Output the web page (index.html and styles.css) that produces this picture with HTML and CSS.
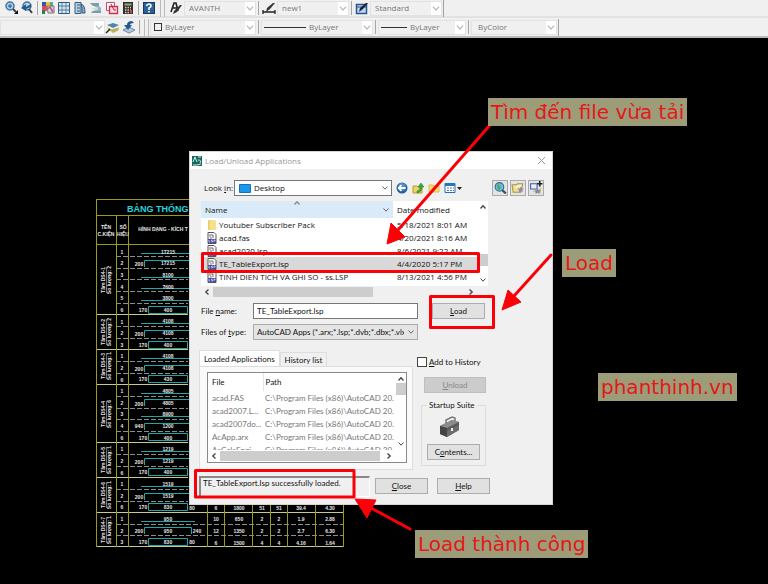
FILE: index.html
```html
<!DOCTYPE html>
<html lang="vi">
<head>
<meta charset="utf-8">
<title>Load/Unload Applications</title>
<link rel="stylesheet" href="styles.css">
</head>
<body>
<svg class="defs" width="0" height="0" aria-hidden="true">
  <symbol id="down" viewBox="0 0 8 8"><path d="M1.5 2.5 4 5.2 6.500 2.500" fill="none" stroke="currentColor"/></symbol>
  <symbol id="up" viewBox="0 0 8 8"><path d="M1.500 5.500 4 2.800 6.500 5.500" fill="none" stroke="currentColor" stroke-width="1.300"/></symbol>
  <symbol id="left" viewBox="0 0 8 8"><path d="M5.500 1.500 2.800 4 5.500 6.500" fill="none" stroke="currentColor" stroke-width="1.300"/></symbol>
  <symbol id="right" viewBox="0 0 8 8"><path d="M2.500 1.500 5.200 4 2.500 6.500" fill="none" stroke="currentColor" stroke-width="1.300"/></symbol>
  <symbol id="lsp" viewBox="0 0 10 12"><path d="M1 .5h6l2 2v9H1z" fill="#fff" stroke="#555"/><path d="M3 2v3M5 2v2M6 3v3M3 6h2" stroke="#444" stroke-width=".8"/><path d="M1 7h8v4H1z" fill="#4a4aa8"/><path d="M2 8v2h1M5.500 8h-1v1h1v1h-1M7 10V8h1v1" fill="none" stroke="#fff" stroke-width=".6"/></symbol>
  <symbol id="bar" viewBox="0 0 60 12"><path d="M1 9.500h59" stroke="#1fa8a8" fill="none"/></symbol>
  <symbol id="bracket" viewBox="0 0 60 12"><path d="M60 4.500H4.500V11" stroke="#1fa8a8" fill="none"/></symbol>
  <symbol id="box" viewBox="0 0 60 12"><path d="M8.500 3.500h39v7h-39z" stroke="#1fa8a8" fill="none"/></symbol>
</svg>

<header class="toolbars">
  <div class="toolbar">
    <div class="tools">
      <button type="button" aria-label="Zoom window"><svg viewBox="0 0 16 16"><circle cx="7" cy="6" r="4" fill="#9fd0ee" stroke="#4d7196" stroke-width="1.500"/><path d="M5 6h4M7 4v4" stroke="#31557c"/><path d="m10 9 3 3" stroke="#345" stroke-width="2"/><path d="M15 10v4h-4z" fill="#111"/></svg></button>
      <button type="button" aria-label="Zoom previous"><svg viewBox="0 0 16 16"><circle cx="8" cy="6" r="4" fill="#aed6ec" stroke="#4d7196" stroke-width="1.500"/><path d="m10 9 3 4" stroke="#345" stroke-width="2"/><path d="m2 8 5-4v3l5-3v3L7 9v2z" fill="#245a91"/></svg></button>
      <i class="sep"></i>
      <button type="button" aria-label="Properties"><svg viewBox="0 0 16 16"><path d="M2 2h4v4H2z" fill="#35a"/><path d="M6 2h4v4H6z" fill="#e7c22e"/><path d="M10 2h3v4h-3z" fill="#5a9"/><path d="M2 6h5v4H2z" fill="#e34a55"/><path d="M2 10h3v4H2z" fill="#27834a"/><path d="M7 6h7v7H8z" fill="#d9d0dc" stroke="#777"/><path d="m5 11 5-4 3 5" stroke="#c15172" fill="none" stroke-width="1.500"/></svg></button>
      <button type="button" aria-label="DesignCenter"><svg viewBox="0 0 16 16"><path d="M2.500 2.500h11v11h-11z" fill="#dceaf4" stroke="#34597d"/><path d="M3 6h10M3 10h10M6 3v10M10 3v10" stroke="#7398b8" stroke-width="1.300"/></svg></button>
      <button type="button" aria-label="Tool palettes"><svg viewBox="0 0 16 16"><path d="M3 2.500h6v11H3z" fill="#b5d0e5" stroke="#34597d"/><path d="M5 5h3M5 8h3M5 11h3" stroke="#456"/><path d="M9 4q4 1 4 9h-3V8z" fill="#7ab0d2" stroke="#34597d"/></svg></button>
      <button type="button" aria-label="Sheet set manager"><svg viewBox="0 0 16 16"><path d="m2 3 8 2 3 3v5L3 12l7-3z" fill="#8fb4c8"/><path d="M2 3h9v3H5zM5 11h8v2H3z" fill="#7f9baf"/><path d="m3 9 7-2v3z" fill="#c8e4b8"/></svg></button>
      <button type="button" aria-label="Markup set manager"><svg viewBox="0 0 16 16"><path d="M2.500 2.500h8v8h-8z" fill="#fff" stroke="#c44c64"/><path d="M5.500 6.500h8v7h-8z" fill="#f7dfe4" stroke="#cc364f" stroke-width="1.400"/><path d="m7 4 3 6h2" stroke="#d05" fill="none"/></svg></button>
      <button type="button" aria-label="QuickCalc"><svg viewBox="0 0 16 16"><path d="M3 2h10v12H3z" fill="#31302c"/><path d="M4.500 3.500h7v2h-7z" fill="#93ad79"/><path d="M5 7.500h6M5 10h6M5 12.500h6" stroke="#d9cab0" stroke-dasharray="1.500 1" stroke-width="1.300"/><path d="M10 10h2v3h-2z" fill="#c44"/></svg></button>
      <i class="sep"></i>
      <button type="button" aria-label="Help"><svg viewBox="0 0 16 16"><rect x="2.500" y="2.500" width="11" height="11" fill="#2d6096" stroke="#173b62"/><path d="M5.500 6q.5-2 2.500-2t2 2q0 1-2 2v2M8 11v1.500" stroke="#fff" stroke-width="1.600" fill="none"/></svg></button>
    </div>
    <i class="grip"></i>
    <svg class="ico" viewBox="0 0 16 16"><path d="m3 12 3-9h2l2 8M4 8h5" stroke="#222" stroke-width="1.600" fill="none"/><path d="m14 5-5 7-4 2 1-3 6-6z" fill="#333"/></svg>
    <label class="combo text-style"><select aria-label="Text style"><option>AVANTH</option></select><svg class="arrow"><use href="#down"/></svg></label>
    <i class="sep"></i>
    <svg class="ico" viewBox="0 0 16 16"><path d="M2 10v4M14 10v4M2 12h12" stroke="#222" stroke-width="1.300"/><path d="m14 3-5 6-4 3 1-4 6-5z" fill="#333"/></svg>
    <label class="combo text-style"><select aria-label="Dimension style"><option>new1</option></select><svg class="arrow"><use href="#down"/></svg></label>
    <i class="sep"></i>
    <svg class="ico" viewBox="0 0 16 16"><path d="M2.500 4.500h10v9h-10z" fill="#b9d9f0" stroke="#28578e" stroke-width="1.500"/><path d="M3 7h9" stroke="#28578e"/><path d="m14 3-5 6-4 3 1-4 6-5z" fill="#223"/></svg>
    <label class="combo text-style"><select aria-label="Table style"><option>Standard</option></select><svg class="arrow"><use href="#down"/></svg></label>
    <i class="edge"></i>
  </div>
  <div class="toolbar">
    <label class="combo layer"><select aria-label="Layer"><option></option></select><svg class="arrow"><use href="#down"/></svg></label>
    <div class="tools">
      <button type="button" aria-label="Make layer current"><svg viewBox="0 0 16 16"><path d="m2 6 6-2 6 2-6 3z" fill="#4f83b4"/><path d="m2 8 6 3 6-3v2l-6 3-5-2z" fill="#d8c94f"/><path d="m5 11 7-2 2 2-6 3z" fill="#b5b05a"/><path d="m1 14 4-4" stroke="#222" stroke-width="1.500"/></svg></button>
      <button type="button" aria-label="Layer previous"><svg viewBox="0 0 16 16"><path d="m2 11 6-3 6 3-6 3z" fill="#b7c8dc" stroke="#6a87ab"/><path d="M11 2q-5 0-5 4H3l4 5 4-5H9q0-2 4-2z" fill="#27588c"/></svg></button>
      <i class="sep"></i>
    </div>
    <i class="grip"></i>
    <label class="combo color"><i class="swatch"></i><select aria-label="Color"><option>ByLayer</option></select><svg class="arrow"><use href="#down"/></svg></label>
    <i class="sep"></i>
    <label class="combo linetype"><i class="rule"></i><select aria-label="Linetype"><option>ByLayer</option></select><svg class="arrow"><use href="#down"/></svg></label>
    <i class="sep"></i>
    <label class="combo lineweight"><i class="rule"></i><select aria-label="Lineweight"><option>ByLayer</option></select><svg class="arrow"><use href="#down"/></svg></label>
    <i class="sep"></i>
    <label class="combo plot"><select aria-label="Plot style"><option>ByColor</option></select><svg class="arrow"><use href="#down"/></svg></label>
    <i class="edge"></i>
  </div>
</header>

<main class="canvas">
  <svg class="drawing" width="252" height="352" viewBox="94 197 252 352">
    <g fill="none" stroke="#8d8d8d" stroke-dasharray="5 2">
      <path d="M116 256.500h72M116 268.500h72M116 279.500h72M116 291.500h72M116 303.500h72M116 326.500h72M116 338.500h72M116 361.500h72M116 373.500h72M116 396.500h72M116 408.500h72M116 419.500h72M116 431.500h72M116 454.500h72M116 466.500h72M116 489.500h72M116 501.500h72M116 524.500h227M116 535.500h227"/>
    </g>
    <g fill="none" stroke="#c9c98a"><path d="M96 314.500h92M96 349.500h92M96 384.500h92M96 442.500h92M96 477.500h92M96 512.500h247M96 546.500h247"/></g>
    <g fill="none" stroke="#9a9a1e"><path d="M96.500 199v348M116.500 215v332M128.500 215v332M96 199.500h247M96 215.500h247M96 244.500h247M207.500 500v47M224.500 500v47M252.500 500v47M270.500 500v47M287.500 500v47M315.500 500v47M343.500 199v348"/></g>
    <text class="cad-title" x="127" y="212">BẢNG THỐNG</text>
    <g class="cad">
      <text x="106" y="229">TÊN</text><text x="106" y="236">C.KIỆN</text>
      <text x="123" y="229">SỐ</text><text x="123" y="236">HIỆU</text>
      <text x="163" y="231">HÌNH DẠNG - KÍCH T</text>
    </g>
    <g>
      <use href="#bar" x="140" y="244" width="60" height="12"/><use href="#bracket" x="140" y="256" width="60" height="12"/><use href="#bar" x="140" y="268" width="60" height="12"/><use href="#bar" x="140" y="279" width="60" height="12"/><use href="#bar" x="140" y="291" width="60" height="12"/><use href="#box" x="140" y="303" width="60" height="12"/>
      <use href="#bar" x="140" y="314" width="60" height="12"/><use href="#bracket" x="140" y="326" width="60" height="12"/><use href="#box" x="140" y="338" width="60" height="12"/>
      <use href="#bar" x="140" y="349" width="60" height="12"/><use href="#bracket" x="140" y="361" width="60" height="12"/><use href="#box" x="140" y="372" width="60" height="12"/>
      <use href="#bar" x="140" y="384" width="60" height="12"/><use href="#bracket" x="140" y="395" width="60" height="12"/><use href="#bar" x="140" y="407" width="60" height="12"/><use href="#bracket" x="140" y="419" width="60" height="12"/><use href="#box" x="140" y="430" width="60" height="12"/>
      <use href="#bar" x="140" y="442" width="60" height="12"/><use href="#bracket" x="140" y="454" width="60" height="12"/><use href="#box" x="140" y="465" width="60" height="12"/>
      <use href="#bar" x="140" y="477" width="60" height="12"/><use href="#bracket" x="140" y="489" width="60" height="12"/><use href="#box" x="140" y="500" width="60" height="12"/>
      <path d="M141 521.500h54M144.500 534v-6.500h47v6.500M148.500 538.500h39v7h-39z" fill="none" stroke="#1fa8a8"/>
    </g>
    <g class="cad">
      <text x="122" y="254">1</text><text x="168" y="254">17215</text>
      <text x="122" y="265">2</text><text x="139" y="266">200</text><text x="168" y="265">17215</text>
      <text x="122" y="277">3</text><text x="168" y="277">8100</text>
      <text x="122" y="289">4</text><text x="168" y="289">7600</text>
      <text x="122" y="300">5</text><text x="168" y="300">3800</text>
      <text x="122" y="312">6</text><text x="143" y="312">170</text><text x="168" y="312">400</text>
      <text x="122" y="324">1</text><text x="168" y="323">4108</text>
      <text x="122" y="335">2</text><text x="139" y="336">200</text><text x="168" y="335">4108</text>
      <text x="122" y="347">3</text><text x="143" y="347">170</text><text x="168" y="347">400</text>
      <text x="122" y="358">1</text><text x="168" y="358">4108</text>
      <text x="122" y="370">2</text><text x="139" y="371">200</text><text x="168" y="370">4108</text>
      <text x="122" y="382">6</text><text x="143" y="381">170</text><text x="168" y="381">430</text>
      <text x="122" y="393">1</text><text x="168" y="393">4805</text>
      <text x="122" y="405">2</text><text x="139" y="406">200</text><text x="168" y="405">4805</text>
      <text x="122" y="416">3</text><text x="168" y="416">8900</text>
      <text x="122" y="428">4</text><text x="139" y="428">940</text><text x="168" y="428">1200</text>
      <text x="122" y="440">6</text><text x="143" y="440">170</text><text x="168" y="440">400</text>
      <text x="122" y="451">1</text><text x="168" y="451">1219</text>
      <text x="122" y="463">2</text><text x="139" y="464">200</text><text x="168" y="463">1219</text>
      <text x="122" y="475">6</text><text x="143" y="474">170</text><text x="168" y="474">400</text>
      <text x="122" y="486">1</text><text x="168" y="486">1519</text>
      <text x="122" y="498">2</text><text x="139" y="499">200</text><text x="168" y="498">1519</text>
      <text x="122" y="509">6</text><text x="143" y="509">170</text><text x="168" y="509">830</text><text x="192" y="510">80</text>
      <text x="122" y="521">1</text><text x="168" y="521">950</text>
      <text x="122" y="533">2</text><text x="139" y="533">200</text><text x="168" y="533">950</text><text x="197" y="533">240</text>
      <text x="122" y="544">3</text><text x="143" y="544">170</text><text x="168" y="544">830</text><text x="192" y="544">80</text>
      <text x="216" y="510">6</text><text x="239" y="510">1800</text><text x="262" y="510">51</text><text x="279" y="510">51</text><text x="301" y="510">39.4</text><text x="330" y="510">4.30</text>
      <text x="216" y="521">10</text><text x="239" y="521">650</text><text x="262" y="521">2</text><text x="279" y="521">2</text><text x="301" y="521">1.9</text><text x="330" y="521">2.88</text>
      <text x="216" y="533">12</text><text x="239" y="533">1350</text><text x="262" y="533">2</text><text x="279" y="533">2</text><text x="301" y="533">2.7</text><text x="330" y="533">6.30</text>
      <text x="216" y="545">6</text><text x="239" y="545">1500</text><text x="262" y="545">4</text><text x="279" y="545">4</text><text x="301" y="545">4.16</text><text x="330" y="545">1.64</text>
    </g>
    <g class="cad">
      <g transform="translate(105 280) rotate(-90)"><text class="under">Tầm DS4-1</text><text y="6">Số lượng: 2</text></g>
      <g transform="translate(105 332) rotate(-90)"><text class="under">Tầm DS4-2</text><text y="6">Số lượng: 2</text></g>
      <g transform="translate(105 366) rotate(-90)"><text class="under">Tầm DS4-3</text><text y="6">Số lượng: 1</text></g>
      <g transform="translate(105 414) rotate(-90)"><text class="under">Tầm DS4-4</text><text y="6">Số lượng: 6</text></g>
      <g transform="translate(105 460) rotate(-90)"><text class="under">Tầm DS4-5</text><text y="6">Số lượng: 1</text></g>
      <g transform="translate(105 495) rotate(-90)"><text class="under">Tầm DS4-6</text><text y="6">Số lượng: 1</text></g>
      <g transform="translate(105 530) rotate(-90)"><text class="under">Tầm DS4-7</text><text y="6">Số lượng: 1</text></g>
    </g>
  </svg>

  <section class="dialog" role="dialog" aria-labelledby="dlg-title">
    <header class="titlebar">
      <svg width="10" height="10" viewBox="0 0 10 10"><path d="M0 0h10v10H0z" fill="#17675f"/><path d="m1 6 2-5 2 5M6 1h3M6 4q4 0 2 3M1 9h4l4-1" stroke="#d3efe9" fill="none"/></svg>
      <h1 id="dlg-title">Load/Unload Applications</h1>
      <button type="button" aria-label="Close window"><svg width="9" height="9" viewBox="0 0 9 9"><path d="m1 1 7 7M8 1 1 8" stroke="#999"/></svg></button>
    </header>

    <div class="lookin">
      <label for="look">Look <u>i</u>n:</label>
      <div class="field">
        <svg width="12" height="9" viewBox="0 0 12 9"><path d="M.5.5h11v8H.5z" fill="#1c98ea" stroke="#1272bd"/></svg>
        <select id="look"><option>Desktop</option></select><svg class="arrow"><use href="#down"/></svg>
      </div>
      <div class="nav">
        <button type="button" aria-label="Back"><svg viewBox="0 0 12 12"><circle cx="6" cy="6" r="5.500" fill="#215f98"/><circle cx="6" cy="5" r="4" fill="#4c8fc0"/><path d="M9.500 6H3M5.500 3 2.700 6l2.800 3" stroke="#fff" stroke-width="1.800" fill="none"/></svg></button>
        <button type="button" aria-label="Up one level"><svg viewBox="0 0 12 12"><path d="M1 4h4l1 1h4v6H1z" fill="#ecd565" stroke="#b89a2e"/><path d="M5 9q3 0 3-4H6l3-4 3 4h-2q0 5-5 6z" fill="#3ca536" stroke="#237a28" stroke-width=".5"/></svg></button>
        <button type="button" aria-label="New folder"><svg viewBox="0 0 12 12"><path d="M1 3h4l1 1h5v6H1z" fill="#f7dd72" stroke="#dfbd4c"/></svg></button>
        <button type="button" class="views" aria-label="Views"><svg viewBox="0 0 18 12"><path d="M1 1.500h10v9H1z" fill="#fff" stroke="#286cae"/><path d="M1 1h10v3H1z" fill="#2776ba"/><path d="M3 6h7M3 8.500h7" stroke="#3780bb" stroke-dasharray="2 1"/><path d="M13 5h5l-2.500 3z" fill="#222"/></svg></button>
      </div>
      <div class="aux">
        <button type="button" aria-label="Search the web"><svg viewBox="0 0 13 13"><circle cx="6" cy="5.500" r="4" fill="#6fb9dc" stroke="#296b99"/><path d="M4 3q3 0 3 3T4 8z" fill="#56a85a"/><path d="m8.500 8.500 3.500 3" stroke="#356" stroke-width="2"/></svg></button>
        <button type="button" aria-label="Favorites"><svg viewBox="0 0 13 13"><path d="M1 3.500h4l1-1h5l-2 8H2z" fill="#eadf91" stroke="#a6964b"/><path d="m4 6 5-2-1 5" stroke="#fff" fill="none"/><path d="m9 5 1 2h2l-1.500 1.500.5 2L9 9.500l-2 1 .5-2L6 7h2z" fill="#9386a8"/></svg></button>
        <button type="button" aria-label="Add to favorites"><svg viewBox="0 0 13 13"><path d="M1.500 2.500h6v5h-6z" fill="#e9edf8" stroke="#405caa"/><path d="M10 0v5M7.500 2.500h5" stroke="#222" stroke-width="1.500"/><path d="M3 9h5l3-3v5H6z" fill="#c8bd63"/><path d="m8 7 1 1.500h2L9.500 10l.5 2L8 11l-2 1 .5-2L5 8.500h2z" fill="#8783a5"/></svg></button>
      </div>
    </div>

    <div class="files">
      <div class="viewport">
        <table>
          <thead><tr><th class="sorted" scope="col"><span>Name<svg class="arrow"><use href="#down"/></svg></span><svg class="asc"><use href="#up"/></svg></th><th scope="col">Date modified</th></tr></thead>
          <tbody>
            <tr><td><span><svg viewBox="0 0 10 12"><path d="M1 1h7l1 1v9H1z" fill="#f7df8d"/><path d="M1 1h2v10H1z" fill="#ecd070"/></svg>Youtuber Subscriber Pack</span></td><td>5/18/2021 8:01 AM</td></tr>
            <tr><td><span><svg><use href="#lsp"/></svg>acad.fas</span></td><td>4/20/2021 8:16 AM</td></tr>
            <tr><td><span><svg><use href="#lsp"/></svg>acad2020.lsp</span></td><td>8/6/2021 9:22 AM</td></tr>
            <tr class="selected"><td><span><svg><use href="#lsp"/></svg>TE_TableExport.lsp</span></td><td>4/4/2020 5:17 PM</td></tr>
            <tr><td><span><svg><use href="#lsp"/></svg>TINH DIEN TICH VA GHI SO - ss.LSP</span></td><td>8/13/2021 4:56 PM</td></tr>
          </tbody>
        </table>
      </div>
      <div class="vscroll"><svg><use href="#up"/></svg><i class="low"></i><svg><use href="#down"/></svg></div>
      <div class="hscroll"><svg><use href="#left"/></svg><i></i><svg><use href="#right"/></svg></div>
    </div>

    <div class="naming">
      <label for="fname">File <u>n</u>ame:</label>
      <input id="fname" type="text" value="TE_TableExport.lsp">
      <button type="button" class="btn"><u>L</u>oad</button>
      <label for="ftype">Files of <u>t</u>ype:</label>
      <div class="field grey"><select id="ftype"><option>AutoCAD Apps (*.arx;*.lsp;*.dvb;*.dbx;*.vlx;*.fas)</option></select><svg class="arrow"><use href="#down"/></svg></div>
    </div>

    <div class="lower">
      <div class="tabs">
        <div class="tablist" role="tablist">
          <button type="button" role="tab" aria-selected="true">Loaded Applications</button>
          <button type="button" role="tab" aria-selected="false">History list</button>
        </div>
        <div class="panel" role="tabpanel">
          <div class="apps">
            <div class="viewport">
              <table>
                <thead><tr><th scope="col">File</th><th scope="col">Path</th></tr></thead>
                <tbody>
                  <tr><td>acad.FAS</td><td>C:\Program Files (x86)\AutoCAD 20.</td></tr>
                  <tr><td>acad2007.L...</td><td>C:\Program Files (x86)\AutoCAD 20.</td></tr>
                  <tr><td>acad2007do...</td><td>C:\Program Files (x86)\AutoCAD 20.</td></tr>
                  <tr><td>AcApp.arx</td><td>C:\Program Files (x86)\AutoCAD 20.</td></tr>
                  <tr><td>AcCalcEngi...</td><td>C:\Program Files (x86)\AutoCAD 20.</td></tr>
                </tbody>
              </table>
            </div>
            <div class="vscroll"><svg><use href="#up"/></svg><i></i><svg><use href="#down"/></svg></div>
            <div class="hscroll"><svg><use href="#left"/></svg><i></i><svg><use href="#right"/></svg></div>
          </div>
        </div>
      </div>
      <div class="side">
        <label class="check"><input type="checkbox"><span><u>A</u>dd to History</span></label>
        <button type="button" class="btn unload" disabled><u>U</u>nload</button>
        <fieldset>
          <legend>Startup Suite</legend>
          <svg width="22" height="22" viewBox="0 0 22 22"><path d="M7 7V4l6-3 3 1v3" fill="none" stroke="#777" stroke-width="1.500"/><path d="m1 10 12-6 7 2v8L8 21l-7-3z" fill="#5b5b5b"/><path d="m1 10 12-6 7 2-12 6z" fill="#8c8c8c"/><path d="m1 10 7 2v9l-7-3z" fill="#444"/><path d="m8 15 12-6v5L8 21z" fill="#6d6d6d"/><path d="M12 12h2v3h-2z" fill="#eee"/></svg>
          <button type="button" class="btn">C<u>o</u>ntents...</button>
        </fieldset>
      </div>
    </div>

    <footer>
      <output>TE_TableExport.lsp successfully loaded.</output>
      <button type="button" class="btn"><u>C</u>lose</button>
      <button type="button" class="btn"><u>H</u>elp</button>
    </footer>
  </section>

  <svg class="marks" width="768" height="584" viewBox="0 0 768 584">
    <g fill="none" stroke="#fb0007" stroke-width="3" stroke-linejoin="round" stroke-linecap="round">
      <path d="M202.500 253.500h276v18h-276zM430.500 296.500h63v31h-63zM195.500 470.500h158.500v26.500H195.500z"/>
      <path d="M490 125 398 230M551 255 514 296M410 529l-39-21"/>
    </g>
    <path d="m387 244 4-21 14 14zM502 310l6-20 13 12zM355 499l21 1-9 18z" fill="#fb0007" stroke="#fb0007" stroke-linejoin="round"/>
  </svg>
  <p class="note find">Tìm đến file vừa tải</p>
  <p class="note load">Load</p>
  <p class="note site">phanthinh.vn</p>
  <p class="note done">Load thành công</p>
</main>
</body>
</html>
```
FILE: styles.css
```css
* { box-sizing: border-box; }
html, body { height: 100%; margin: 0; }
body {
  display: flex;
  flex-direction: column;
  position: relative;
  overflow: hidden;
  background: #000;
  color: #111;
  font: 8px/12px Lato, "Liberation Sans", sans-serif;
}
button, select, input { font: inherit; color: inherit; margin: 0; padding: 0; border: 0; background: none; border-radius: 0; }
select { appearance: none; flex: 1; min-width: 0; width: 100%; overflow: hidden; outline: 0; }
svg { display: block; flex: none; }
i { display: block; flex: none; }
.defs { position: absolute; }
.arrow { width: 8px; height: 8px; color: #666; }

/* toolbars */
.toolbars { background: #f0f0f0; border-bottom: 2px solid #b9b9b9; color: #777; font: 8px/12px "Open Sans", sans-serif; }
.toolbar { display: flex; align-items: center; height: 18px; }
.toolbar:first-child { box-shadow: inset 0 -2px #e2e2e2; padding-bottom: 2px; padding-left: 3px; }
.tools { display: flex; align-items: center; }
.tools button, .tools button svg, .ico { width: 16px; height: 16px; }
.sep { width: 1px; height: 14px; margin: 0 2px; background: #a5a5a5; }
.edge { width: 1px; height: 17px; margin-left: 1px; background: #a0a0a0; }
.grip { width: 5px; height: 17px; margin: 0 3px; border: solid #bbb; border-width: 0 1px; }
.toolbar:last-child .grip { margin: 0 1px 0 2px; }
.combo { display: flex; align-items: center; height: 15px; border: 1px solid #e2e2e2; background: #f0f0f0; padding-left: 2px; }
.combo .arrow { width: 10px; height: 13px; background: #fff; color: #bbb; }
.text-style { width: 72px; padding-left: 4px; }
.layer { width: 105px; }
.color { width: 106px; padding-left: 3px; gap: 3px; }
.linetype { width: 112px; gap: 3px; }
.lineweight { width: 88px; gap: 3px; }
.plot { width: 86px; padding-left: 6px; }
.swatch { width: 8px; height: 8px; border: 1px solid #333; }
.rule { width: 26px; height: 1px; background: #333; }
.linetype .rule { width: 42px; }

/* drawing */
.canvas { flex: 1; background: #000; }
.drawing { position: absolute; left: 94px; top: 197px; }
.cad { fill: #e6e6e6; font: bold 5px "Liberation Sans", sans-serif; text-anchor: middle; }
.cad-title { fill: #27d3d8; font: bold 9px "Liberation Sans", sans-serif; }
.under { text-decoration: underline; }

/* dialog */
.dialog { position: absolute; left: 189px; top: 151px; width: 364px; background: #f0f0f0; border: 1px solid #d5d5d5; }
.titlebar { display: flex; align-items: center; gap: 3px; height: 17px; padding: 0 6px 0 2px; background: #fff; color: #999; }
.titlebar h1 { flex: 1; margin: 0; font: 8px/12px "Open Sans", sans-serif; }
.lookin { display: flex; align-items: center; height: 16px; margin: 11px 8px 0 14px; font: 8px/12px "Open Sans", sans-serif; }
.lookin label { width: 30px; }
.field { display: flex; align-items: center; gap: 3px; height: 16px; padding: 0 2px 0 4px; border: 1px solid #777; background: #fff; }
.lookin .field { width: 158px; }
.nav { display: flex; flex: 1; gap: 4px; margin-left: 4px; }
.nav svg { width: 12px; height: 12px; }
.nav .views svg { width: 18px; }
.aux { display: flex; gap: 2px; }
.aux button { width: 16px; height: 16px; border: 1px solid #aaa; background: #e4e4e4; }
.aux svg { width: 14px; height: 14px; }

table { border-collapse: collapse; table-layout: fixed; width: 100%; }
th, td { padding: 0; text-align: left; font-weight: normal; white-space: nowrap; }
.files { display: grid; grid-template-columns: 1fr 11px; margin: 5px 64px 0 11px; background: #fff; }
.files .viewport { height: 85px; overflow: hidden; font: 8px/12px "Open Sans", sans-serif; }
.files thead tr { height: 17px; }
.files tbody tr { height: 13px; }
.files td { line-height: 13px; }
.files th:first-child { width: 192px; padding-left: 4px; background: #d9ebf9; position: relative; }
.files th:last-child, .files td:last-child { padding-left: 4px; }
.files th span { display: flex; justify-content: space-between; align-items: center; padding-right: 3px; }
.asc { position: absolute; left: 92px; top: -2px; width: 8px; height: 8px; color: #888; }
.files td span { display: flex; align-items: center; gap: 2px; padding-left: 6px; }
.files td svg { width: 10px; height: 12px; }
.files .selected { background: #d9d9d9; }
.vscroll { display: flex; flex-direction: column; align-items: center; justify-content: space-between; color: #444; padding: 2px 0; }
.vscroll svg, .hscroll svg { width: 8px; height: 8px; }
.vscroll i { width: 10px; height: 12px; background: #cdcdcd; margin-bottom: auto; }
.vscroll .low { margin-top: auto; margin-bottom: 10px; }
.hscroll { display: flex; align-items: center; height: 12px; padding: 0 2px; gap: 2px; color: #444; background: #f0f0f0; grid-column: 1 / 3; }
.hscroll i { width: 160px; height: 10px; background: #cdcdcd; margin-right: auto; }
.files .hscroll { padding-right: 13px; }

.btn { height: 16px; border: 1px solid #adadad; background: #e1e1e1; line-height: 12px; text-align: center; }
.btn:disabled { background: #ccc; border-color: #bfbfbf; color: #888; }
.naming { display: grid; grid-template-columns: 52px 165px 53px; gap: 5px 0; align-items: center; margin: 5px 0 0 11px; }
.naming input { height: 16px; padding: 0 3px; border: 1px solid #777; background: #fff; outline: 0; }
.naming .btn { margin-left: 14px; width: 53px; }
.field.grey { background: #e4e4e4; border-color: #aaa; grid-column: 2; }
.naming .field { padding-left: 3px; }

.lower { display: flex; gap: 4px; margin: 10px 0 0 9px; }
.tabs { width: 214px; }
.tablist { display: flex; align-items: flex-end; }
.tablist button { height: 14px; padding: 0 4px; border: 1px solid #ddd; border-bottom: 0; }
.tablist button[aria-selected="true"] { height: 16px; background: #fff; }
.panel { padding: 5px 5px 6px 7px; border: 1px solid #ddd; background: #fafafa; }
.apps { display: grid; grid-template-columns: 1fr 10px; border: 1px solid #888; background: #fff; }
.apps .viewport { height: 77px; overflow: hidden; }
.apps thead tr { height: 18px; }
.apps tbody tr { height: 13px; color: #777; }
.apps th:first-child { width: 55px; border-right: 1px solid #e5e5e5; }
.apps th, .apps td { padding-left: 4px; overflow: hidden; }
.apps th:last-child, .apps td:last-child { padding-left: 2px; }
.apps .hscroll { padding-right: 13px; background: #fff; }
.side { width: 72px; padding-top: 6px; }
.check { display: flex; align-items: center; gap: 2px; height: 12px; white-space: nowrap; }
.check input { appearance: none; width: 10px; height: 10px; border: 1px solid #444; background: #fff; }
.unload { display: block; width: 62px; margin: 9px 0 0 7px; }
fieldset { width: 65px; margin: 6px 0 0 4px; padding: 4px 5px 5px; border: 1px solid #dcdcdc; min-width: 0; }
legend { padding: 0 2px; line-height: 12px; white-space: nowrap; }
fieldset svg { margin: 1px auto 6px 12px; }
fieldset .btn { width: 53px; }

footer { display: flex; gap: 9px; align-items: center; height: 34px; padding: 0 0 2px 9px; }
output { width: 171px; height: 21px; padding: 0 2px; border: 1px solid #fff; border-top: 2px solid #888; border-left: 2px solid #888; line-height: 11px; }
footer output { margin-right: -4px; }
footer .btn { width: 53px; }

/* annotations */
.marks { position: absolute; left: 0; top: 0; pointer-events: none; }
.note { position: absolute; margin: 0; padding: 0 3px; background: #9c9c78; color: #e51717; font: 20px/28px "DejaVu Sans", sans-serif; white-space: nowrap; }
.find { left: 488px; top: 98px; }
.load { left: 562px; top: 249px; }
.site { left: 598px; top: 373px; }
.done { left: 415px; top: 530px; }
```
